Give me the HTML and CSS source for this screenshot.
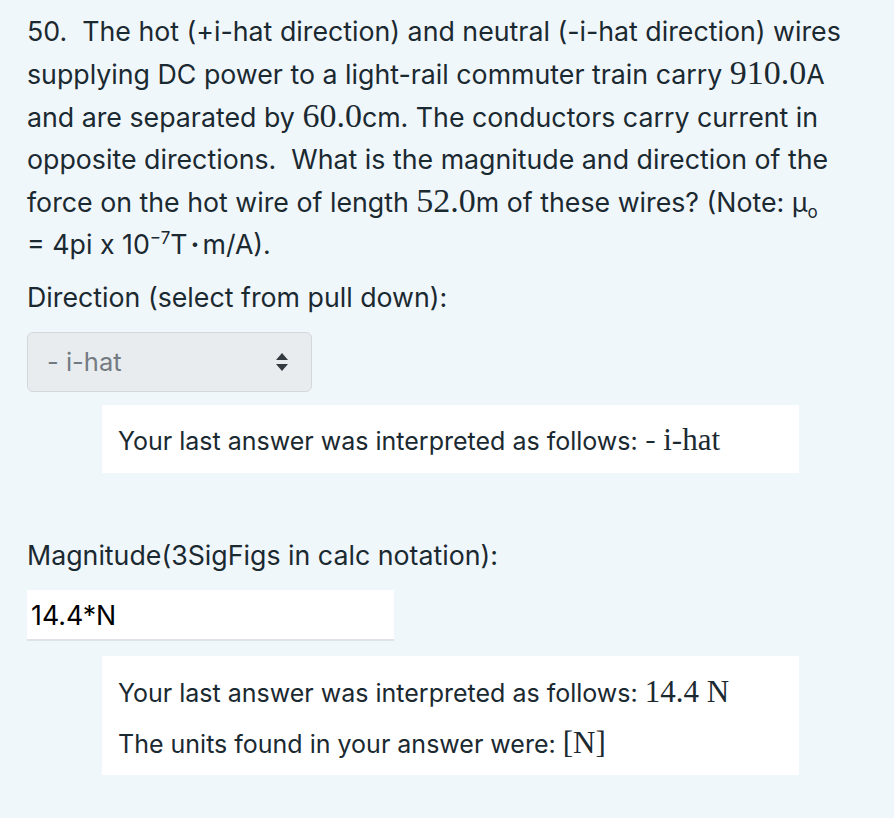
FILE: index.html
```html
<!DOCTYPE html>
<html>
<head>
<meta charset="utf-8">
<link rel="stylesheet" href="styles.css">
</head>
<body>
<main class="problem">
  <p class="question">50.&nbsp; The hot (+i-hat direction) and neutral (-i-hat direction) wires supplying DC power to a light-rail commuter train carry <span class="m">910.0</span>A and are separated by <span class="m">60.0</span>cm. The conductors carry current in opposite directions.&nbsp; What is the magnitude and direction of the force on the hot wire of length <span class="m">52.0</span>m of these wires? (Note: μ<sub class="sub">o</sub> =&nbsp;4pi x 10<sup class="sup">−7</sup>T<span class="dot">·</span>m/A).</p>

  <p class="label">Direction (select from pull down):</p>
  <div class="select">
    <span class="select-value">- i-hat</span>
    <svg class="select-arrow" width="12" height="18" viewBox="0 0 12 18">
      <path d="M6 0 L12 7 L0 7 Z" fill="#333a40"/>
      <path d="M0 11 L12 11 L6 18 Z" fill="#333a40"/>
    </svg>
  </div>
  <div class="feedback">
    <p class="fb-line">Your last answer was interpreted as follows: - <span class="m">i-hat</span></p>
  </div>

  <p class="label label-mag">Magnitude(3SigFigs in calc notation):</p>
  <div class="answer-input">14.4*N</div>
  <div class="feedback feedback-two">
    <p class="fb-line">Your last answer was interpreted as follows: <span class="m">14.4 N</span></p>
    <p class="fb-line">The units found in your answer were: <span class="m">[N]</span></p>
  </div>
</main>
</body>
</html>
```

FILE: styles.css
```css
html, body {
  margin: 0;
  padding: 0;
}
body {
  background: #f0f7fb;
  color: #1b2931;
  font-family: "Inter", "Liberation Sans", sans-serif;
  font-size: 26.75px;
  line-height: 42px;
}
.problem {
  padding: 10px 40px 40px 27px;
  display: flex;
  flex-direction: column;
  align-items: flex-start;
}
.question {
  margin: 0;
}
.question .m {
  font-size: 34px;
}
.m {
  font-family: "Liberation Serif", serif;
  font-size: 31px;
}
.sub {
  font-size: 17px;
  vertical-align: -6px;
  line-height: 0;
}
.sup {
  font-size: 17px;
  vertical-align: 10px;
  line-height: 0;
}
.dot {
  font-weight: bold;
  padding: 0 3px;
}
.label {
  margin: 11px 0 0 0;
}
.select {
  margin-top: 14px;
  box-sizing: border-box;
  width: 285px;
  height: 60px;
  background: #e9ecef;
  border: 1px solid #d3d8dc;
  border-radius: 6px;
  display: flex;
  align-items: center;
  justify-content: space-between;
  padding: 0 23px 0 19px;
  font-size: 25.5px;
}
.select-value {
  color: #737b82;
}
.select-arrow {
  display: block;
}
.feedback {
  margin: 13px 0 0 75px;
  box-sizing: border-box;
  width: 697px;
  background: #ffffff;
  padding: 14px 16px 11px 16px;
  font-size: 25px;
}
.fb-line {
  margin: 0;
}
.feedback-two {
  margin-top: 15px;
  padding: 15px 16px 10px 16px;
  display: flex;
  flex-direction: column;
  gap: 8px;
}
.label-mag {
  margin-top: 61px;
}
.answer-input {
  margin-top: 14px;
  box-sizing: border-box;
  width: 367px;
  height: 51px;
  background: #ffffff;
  border-bottom: 2px solid #dfe3e7;
  color: #000000;
  padding: 4px 4px 0 4px;
}
```
